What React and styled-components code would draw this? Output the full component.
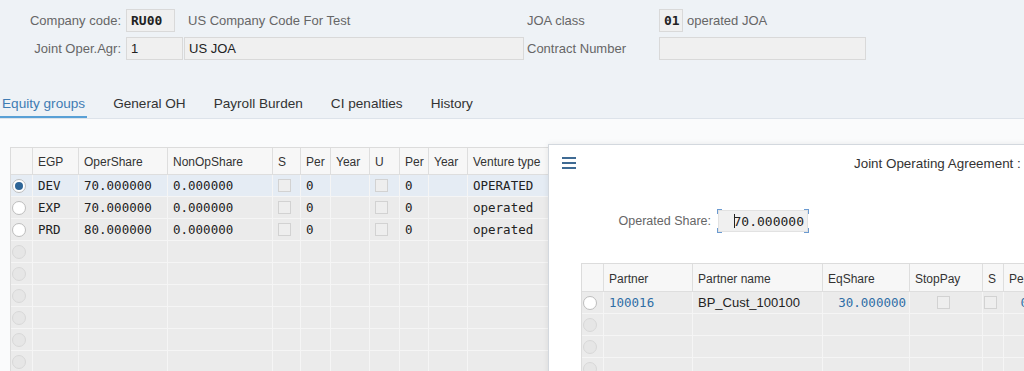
import React from "react";
import styled, { createGlobalStyle } from "styled-components";

const GlobalStyle = createGlobalStyle`
  html, body {
    margin: 0;
    padding: 0;
    width: 1024px;
    height: 371px;
    overflow: hidden;
    font-family: "Liberation Sans", Arial, sans-serif;
  }
  * { box-sizing: border-box; }
`;

const MONO = `"DejaVu Sans Mono", "Liberation Mono", monospace`;

const Page = styled.div`
  width: 1024px;
  height: 371px;
  overflow: hidden;
  display: flex;
  flex-direction: column;
  background: #fafbfc;
`;

const Top = styled.div`
  background: #eef2f6;
  padding-top: 9px;
  border-bottom: 1px solid #dde3ea;
`;

const Form = styled.div`
  display: flex;
  flex-direction: column;
  gap: 5px;
`;

const FormRow = styled.div`
  display: flex;
  align-items: center;
  height: 23px;
`;

const Label = styled.div`
  width: ${p => p.$w}px;
  padding-right: ${p => p.$pr || 0}px;
  text-align: ${p => p.$align || "right"};
  font-size: ${p => p.$size || 13}px;
  color: #666;
  white-space: nowrap;
  flex-shrink: 0;
`;

const Field = styled.div`
  width: ${p => p.$w}px;
  height: 23px;
  margin-right: ${p => p.$mr || 0}px;
  background: #f0f0f0;
  border: 1px solid #d9d9d9;
  padding: 0 4px;
  display: flex;
  align-items: center;
  font-size: 13px;
  color: #222;
  font-family: ${p => (p.$mono ? MONO : "inherit")};
  font-weight: ${p => (p.$mono ? "bold" : "normal")};
  flex-shrink: 0;
`;

const Desc = styled.div`
  width: ${p => p.$w}px;
  padding-left: ${p => p.$pl || 0}px;
  font-size: 13px;
  color: #666;
  flex-shrink: 0;
`;

const Tabs = styled.div`
  display: flex;
  gap: 28px;
  margin-top: 33px;
  padding-left: 2px;
`;

const Tab = styled.div`
  font-size: 13.6px;
  color: ${p => (p.$active ? "#3f7cb3" : "#333")};
  height: 25px;
  line-height: 22px;
  position: relative;
  &::after {
    content: "";
    position: absolute;
    left: -2px;
    right: -2px;
    bottom: 0;
    height: 2px;
    background: ${p => (p.$active ? "#58a0d6" : "transparent")};
  }
`;

const Content = styled.div`
  position: relative;
  flex: 1;
  padding: 28px 0 0 10px;
`;

const Grid = styled.div`
  display: grid;
  grid-template-columns: ${p => p.$cols};
  grid-template-rows: ${p => p.$head}px;
  grid-auto-rows: 22px;
  border-top: 1px solid #dcdcdc;
  border-left: 1px solid #dcdcdc;
  width: max-content;
`;

const HeadCell = styled.div`
  background: #f7f7f7;
  border-right: 1px solid #dedede;
  border-bottom: 1px solid #dedede;
  font-size: 12px;
  color: #333;
  display: flex;
  align-items: center;
  padding: 2px 0 0 5px;
  white-space: nowrap;
  overflow: hidden;
`;

const Cell = styled.div`
  background: ${p => (p.$sel ? "#e5ecf4" : "#ebebeb")};
  border-right: 1px solid #f5f5f5;
  border-bottom: 1px solid #f5f5f5;
  display: flex;
  align-items: center;
  justify-content: ${p => (p.$right ? "flex-end" : p.$center ? "center" : "flex-start")};
  padding: 0 ${p => (p.$right ? 3 : 5)}px 0 ${p => (p.$center || p.$right ? 0 : 5)}px;
  font-family: ${p => (p.$sans ? "'Liberation Sans', Arial, sans-serif" : MONO)};
  font-size: ${p => (p.$sans ? 13 : 12.5)}px;
  color: ${p => (p.$blue ? "#2f6ea6" : "#222")};
  white-space: nowrap;
  overflow: hidden;
`;

const Radio = styled.span`
  width: 14px;
  height: 14px;
  border-radius: 50%;
  border: 1px solid ${p => (p.$empty ? "#d8d8d8" : "#bdbdbd")};
  background: ${p => (p.$empty ? "#e6e6e6" : "#fff")};
  display: flex;
  align-items: center;
  justify-content: center;
  &::after {
    content: "";
    width: 8px;
    height: 8px;
    border-radius: 50%;
    background: ${p => (p.$on ? "#2e6597" : "transparent")};
  }
`;

const Check = styled.span`
  width: 13px;
  height: 13px;
  border: 1px solid #d2d2d2;
  background: #eeeeee;
`;

const Dialog = styled.div`
  position: absolute;
  left: 548px;
  top: 25px;
  width: 560px;
  height: 260px;
  background: #fff;
  border: 1px solid #d3d8de;
  box-shadow: 0 0 6px rgba(0, 0, 0, 0.08);
`;

const DialogHead = styled.div`
  display: flex;
  align-items: center;
  height: 36px;
  padding: 0 0 0 13px;
`;

const Burger = styled.div`
  width: 14px;
  display: flex;
  flex-direction: column;
  gap: 3px;
  span {
    height: 2px;
    background: #3f6b94;
  }
`;

const Title = styled.div`
  margin-left: 278px;
  font-size: 13.4px;
  color: #333;
  white-space: nowrap;
`;

const ShareRow = styled.div`
  display: flex;
  align-items: center;
  margin-top: 28px;
  padding-left: 66px;
`;

const Focus = styled.div`
  margin-left: 6px;
  padding: 1px;
  --c: #6b9ad0;
  background:
    linear-gradient(var(--c), var(--c)) left top / 1px 5px no-repeat,
    linear-gradient(var(--c), var(--c)) left top / 5px 1px no-repeat,
    linear-gradient(var(--c), var(--c)) right top / 1px 5px no-repeat,
    linear-gradient(var(--c), var(--c)) right top / 5px 1px no-repeat,
    linear-gradient(var(--c), var(--c)) left bottom / 1px 5px no-repeat,
    linear-gradient(var(--c), var(--c)) left bottom / 5px 1px no-repeat,
    linear-gradient(var(--c), var(--c)) right bottom / 1px 5px no-repeat,
    linear-gradient(var(--c), var(--c)) right bottom / 5px 1px no-repeat;
`;

const ShareInput = styled.div`
  width: 90px;
  height: 22px;
  background: #f0f0f0;
  border: 1px solid #e2e2e2;
  display: flex;
  align-items: center;
  justify-content: flex-end;
  padding-right: 3px;
  font-family: ${MONO};
  font-size: 13px;
  color: #222;
`;

const Caret = styled.span`
  width: 1px;
  height: 14px;
  background: #222;
  margin-right: -1px;
`;

const PartnerWrap = styled.div`
  margin-top: 30px;
  padding-left: 32px;
`;

const eqRows = [
  { egp: "DEV", oper: "70.000000", vt: "OPERATED", sel: true },
  { egp: "EXP", oper: "70.000000", vt: "operated" },
  { egp: "PRD", oper: "80.000000", vt: "operated" },
];

const eqHeads = ["", "EGP", "OperShare", "NonOpShare", "S", "Per", "Year", "U", "Per", "Year", "Venture type"];
const eqCols = "22px 46px 89px 105px 28px 30px 39px 30px 29px 39px 81px";

const pHeads = ["", "Partner", "Partner name", "EqShare", "StopPay", "S", "Per"];
const pCols = "22px 89px 130px 87px 73px 21px 28px";

function EquityTable() {
  const empties = Array.from({ length: 6 });
  return (
    <Grid $cols={eqCols} $head={27}>
      {eqHeads.map((h, i) => (
        <HeadCell key={"h" + i}>{h}</HeadCell>
      ))}
      {eqRows.map(r => (
        <React.Fragment key={r.egp}>
          <Cell $sel={r.sel} $center><Radio $on={r.sel} /></Cell>
          <Cell $sel={r.sel}>{r.egp}</Cell>
          <Cell $sel={r.sel}>{r.oper}</Cell>
          <Cell $sel={r.sel}>0.000000</Cell>
          <Cell $sel={r.sel}><Check /></Cell>
          <Cell $sel={r.sel}>0</Cell>
          <Cell $sel={r.sel} />
          <Cell $sel={r.sel}><Check /></Cell>
          <Cell $sel={r.sel}>0</Cell>
          <Cell $sel={r.sel} />
          <Cell $sel={r.sel}>{r.vt}</Cell>
        </React.Fragment>
      ))}
      {empties.map((_, i) => (
        <React.Fragment key={"e" + i}>
          <Cell $center><Radio $empty /></Cell>
          {eqHeads.slice(1).map((_, j) => (
            <Cell key={j} />
          ))}
        </React.Fragment>
      ))}
    </Grid>
  );
}

function PartnerTable() {
  return (
    <Grid $cols={pCols} $head={28}>
      {pHeads.map((h, i) => (
        <HeadCell key={"h" + i}>{h}</HeadCell>
      ))}
      <Cell $center><Radio /></Cell>
      <Cell $blue>100016</Cell>
      <Cell $sans>BP_Cust_100100</Cell>
      <Cell $blue $right>30.000000</Cell>
      <Cell $center><Check /></Cell>
      <Cell $center><Check /></Cell>
      <Cell $blue $right>0</Cell>
      {[0, 1, 2].map(i => (
        <React.Fragment key={"e" + i}>
          <Cell $center><Radio $empty /></Cell>
          {pHeads.slice(1).map((_, j) => (
            <Cell key={j} />
          ))}
        </React.Fragment>
      ))}
    </Grid>
  );
}

export default function App() {
  return (
    <>
      <GlobalStyle />
      <Page>
        <Top>
          <Form>
            <FormRow>
              <Label $w={126} $pr={5}>Company code:</Label>
              <Field $w={49} $mono>RU00</Field>
              <Desc $w={352} $pl={13}>US Company Code For Test</Desc>
              <Label $w={132} $align="left">JOA class</Label>
              <Field $w={24} $mono>01</Field>
              <Desc $w={120} $pl={4}>operated JOA</Desc>
            </FormRow>
            <FormRow>
              <Label $w={126} $pr={5}>Joint Oper.Agr:</Label>
              <Field $w={57} $mr={1}>1</Field>
              <Field $w={340} $mr={3}>US JOA</Field>
              <Label $w={132} $align="left">Contract Number</Label>
              <Field $w={207} />
            </FormRow>
          </Form>
          <Tabs>
            <Tab $active>Equity groups</Tab>
            <Tab>General OH</Tab>
            <Tab>Payroll Burden</Tab>
            <Tab>CI penalties</Tab>
            <Tab>History</Tab>
          </Tabs>
        </Top>
        <Content>
          <EquityTable />
          <Dialog>
            <DialogHead>
              <Burger>
                <span />
                <span />
                <span />
              </Burger>
              <Title>Joint Operating Agreement :</Title>
            </DialogHead>
            <ShareRow>
              <Label $w={96} $size={12.5}>Operated Share:</Label>
              <Focus>
                <ShareInput>
                  <Caret />
                  70.000000
                </ShareInput>
              </Focus>
            </ShareRow>
            <PartnerWrap>
              <PartnerTable />
            </PartnerWrap>
          </Dialog>
        </Content>
      </Page>
    </>
  );
}
